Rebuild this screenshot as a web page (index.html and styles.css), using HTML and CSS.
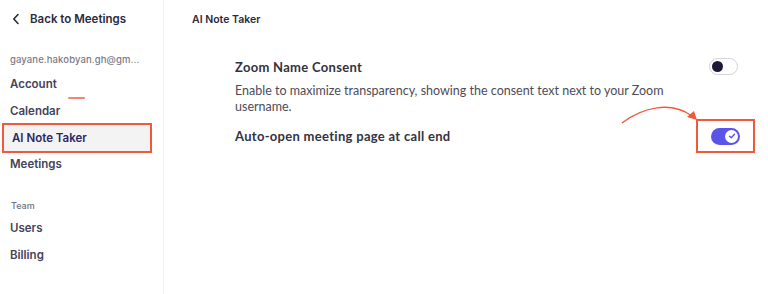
FILE: index.html
```html
<!DOCTYPE html>
<html>
<head>
<meta charset="utf-8">
<link rel="stylesheet" href="styles.css">
</head>
<body>
<div class="app">
  <aside class="sidebar">
    <div class="back">
      <svg class="chev" width="8" height="12" viewBox="0 0 8 12"><path d="M6 1.5 L1.8 6 L6 10.5" fill="none" stroke="#2b2a3d" stroke-width="1.6" stroke-linecap="round" stroke-linejoin="round"/></svg>
      <span>Back to Meetings</span>
    </div>
    <div class="email">gayane.hakobyan.gh@gm...</div>
    <nav class="nav first">
      <div class="item">Account<span class="underline"></span></div>
      <div class="item">Calendar</div>
      <div class="item active">AI Note Taker</div>
      <div class="item">Meetings</div>
    </nav>
    <div class="section">Team</div>
    <nav class="nav">
      <div class="item">Users</div>
      <div class="item">Billing</div>
    </nav>
  </aside>
  <main class="main">
    <div class="title">AI Note Taker</div>
    <div class="settings">
      <div class="row">
        <div class="label">Zoom Name Consent</div>
        <div class="toggle off"><span class="knob"></span></div>
      </div>
      <div class="desc">Enable to maximize transparency, showing the consent text next to your Zoom username.</div>
      <div class="row row2">
        <div class="label">Auto-open meeting page at call end</div>
        <div class="hl">
          <div class="toggle on"><span class="knob"><svg width="8" height="8" viewBox="0 0 8 8"><path d="M1.5 4.2 L3.3 5.8 L6.5 2.3" fill="none" stroke="#5b54e8" stroke-width="1.4" stroke-linecap="round" stroke-linejoin="round"/></svg></span></div>
        </div>
      </div>
    </div>
    <svg class="arrow" width="90" height="30" viewBox="0 0 90 30"><path d="M1 21 C 22 5, 50 -1, 71 14" fill="none" stroke="#ef5a3c" stroke-width="1.5"/><path d="M76 18 L66 15 L73 9 Z" fill="#ef5a3c"/></svg>
  </main>
</div>
</body>
</html>
```
FILE: styles.css
```css
html, body { margin: 0; padding: 0; background: #fff; }
body { width: 768px; height: 294px; overflow: hidden; font-family: Inter, "Noto Sans", sans-serif; }
.app { display: flex; height: 294px; }
.sidebar { width: 164px; border-right: 1.5px solid #efeff1; box-sizing: border-box; padding-top: 11px; flex-shrink: 0; }
.back { display: flex; align-items: center; gap: 10px; padding-left: 11px; font-size: 11.5px; font-weight: 600; color: #2b2a3d; height: 16px; }
.chev { margin-left: 1px; }
.email { font-size: 9.5px; color: #7b7a88; padding-left: 10px; margin-top: 27px; font-weight: 500; letter-spacing: 0.1px; }
.nav { display: flex; flex-direction: column; }
.nav.first { margin-top: 6px; }
.item { position: relative; font-size: 11.5px; font-weight: 600; color: #44435a; padding-left: 10px; height: 27px; line-height: 27px; }
.item.active { margin-left: 2px; width: 150px; box-sizing: border-box; padding-left: 8px; border: 2px solid #ef5a3c; background: #f3f3f4; color: #2b2766; height: 30px; line-height: 26px; margin-top: -2.5px; margin-bottom: -1.5px; }
.underline { position: absolute; left: 68px; top: 26px; width: 17px; height: 2px; background: #f0866f; border-radius: 1px; }
.section { font-size: 9px; color: #6f6e7c; padding-left: 11px; margin-top: 22px; margin-bottom: 4px; font-weight: 500; }
.main { position: relative; flex: 1; padding-left: 28px; padding-top: 12px; font-family: Lato, "Open Sans", sans-serif; }
.title { font-family: Inter, sans-serif; font-size: 10.5px; font-weight: 600; color: #2b2a3d; height: 16px; line-height: 16px; }
.settings { margin-left: 43px; margin-top: 30px; width: 504px; }
.row { display: flex; justify-content: space-between; align-items: center; }
.label { font-size: 13px; font-weight: 700; color: #33323f; letter-spacing: 0.3px; }
.desc { font-size: 12.5px; color: #4d4c58; line-height: 16px; margin-top: 8px; letter-spacing: 0; width: 450px; }
.row2 { margin-top: 4px; }
.toggle { width: 29px; height: 17px; border-radius: 9px; box-sizing: border-box; position: relative; }
.toggle.off { border: 1px solid #d3d3d9; background: #fff; margin-right: 1px; }
.toggle.off .knob { position: absolute; left: 2px; top: 2px; width: 11px; height: 11px; border-radius: 50%; background: #1c1838; }
.toggle.on { background: #5b54e8; }
.toggle.on .knob { position: absolute; right: 2px; top: 2px; width: 13px; height: 13px; border-radius: 50%; background: #fff; display: flex; align-items: center; justify-content: center; }
.hl { border: 2px solid #ef5a3c; width: 59px; height: 34px; box-sizing: border-box; display: flex; align-items: center; justify-content: center; margin-right: -16px; }
.arrow { position: absolute; left: 457px; top: 102px; }
```
